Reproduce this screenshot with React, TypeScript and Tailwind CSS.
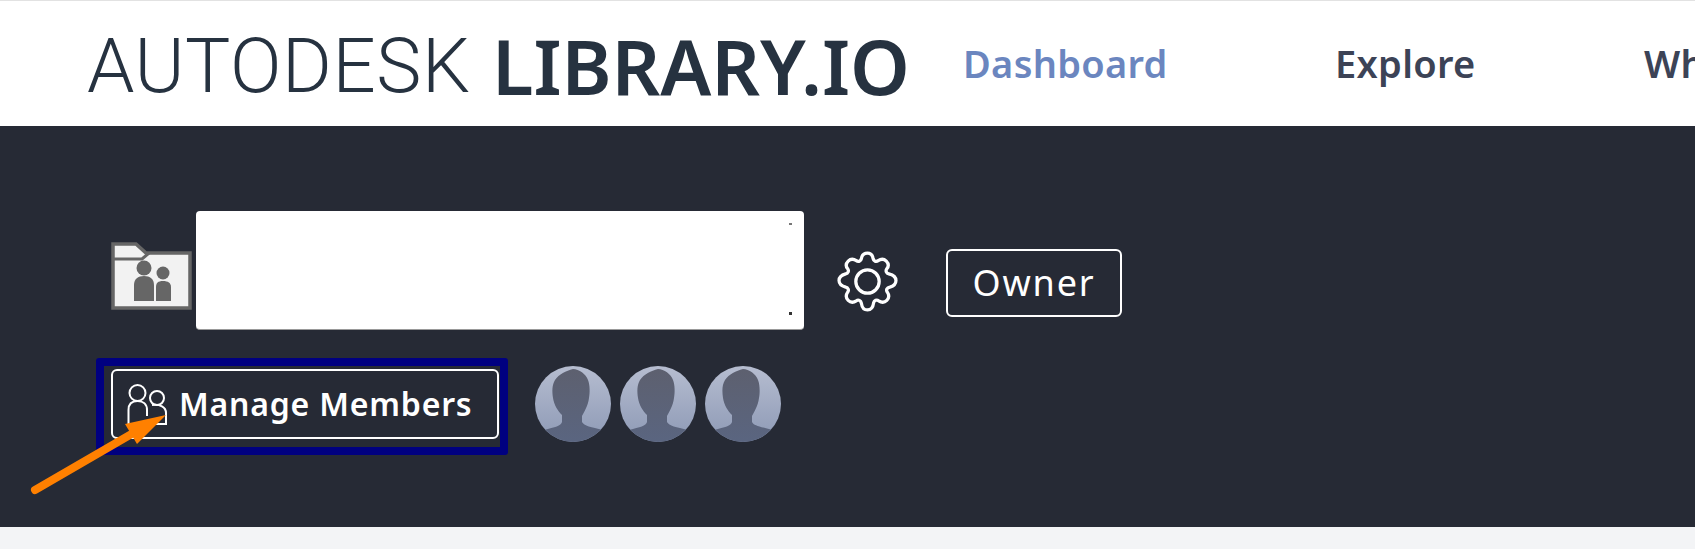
import React from 'react';

function FolderIcon() {
  return (
    <svg width="81" height="68" viewBox="0 0 81 68" className="shrink-0">
      <path d="M2 2H25L35 11H79V66H2Z" fill="#f2f2f2" stroke="#666" strokeWidth="3.500" />
      <path d="M2 17H31L38 11" fill="none" stroke="#666" strokeWidth="3" />
      <circle cx="33" cy="26" r="7.500" fill="#666" />
      <path d="M23 59V43C23 37 27 34 33 34C39 34 43 37 43 43V59Z" fill="#666" />
      <circle cx="52" cy="31" r="6.500" fill="#666" />
      <path d="M45 59V45C45 41 47 39 52 39C57 39 60 41 60 45V59Z" fill="#666" />
    </svg>
  );
}

function GearIcon() {
  const teeth = 'M30 2C33 2 35 4 35.500 7.500C36 10 38.500 11 40.500 9.500C43.500 7.500 46 7.500 48.500 10C51 12.500 51 15 49 17.500C47.500 19.500 48.500 22 51 22.500C55 23.500 58 25.500 58 29C58 32.500 55.500 34.500 52 35.500C49 36 48 38.500 49.500 40.500C51.500 43.500 51.500 46 49 48.500C46.500 51 44 51 41 49C39 47.500 36.500 48.500 36 51C35.500 55 33.500 58 30 58C26.500 58 24.500 55 24 51.500C23.500 48.500 21 47.500 19 49C16 51 13.500 51 11 48.500C8.500 46 8.500 43.500 10.500 40.500C12 38.500 11 36 8.500 35.500C5 34.500 2 32.500 2 29C2 25.500 5 23.500 8.500 22.500C11 22 12 19.500 10.500 17.500C8.500 15 8.500 12.500 11 10C13.500 7.500 16 7.500 19 9.500C21 11 23.500 10 24 7.500C24.500 4 27 2 30 2Z';
  return (
    <svg width="61" height="61" viewBox="0 0 60 60" fill="none" stroke="#fff" strokeWidth="3.200" className="shrink-0">
      <path d={teeth} strokeLinejoin="round" />
      <circle cx="30" cy="30" r="11.500" />
    </svg>
  );
}

function MembersIcon() {
  return (
    <svg width="40" height="41" viewBox="0 0 40 41" fill="none" stroke="#fff" strokeWidth="2" className="shrink-0">
      <circle cx="10.500" cy="9" r="8" />
      <path d="M1.500 40V26C1.500 20 5 17 10.500 17C16 17 20 20 20 26V32" />
      <circle cx="30" cy="14" r="7" />
      <path d="M25 21C33 20 39 23 39 29V40H24" />
    </svg>
  );
}

function Avatar() {
  return (
    <div className="w-[76px] h-[76px] rounded-full overflow-hidden bg-gradient-to-b from-[#b6bdd0] to-[#8d99b5]">
      <svg width="76" height="76" viewBox="0 0 76 76">
        <defs>
          <linearGradient id="bust" x1="0" y1="0" x2="0" y2="1">
            <stop offset="0" stopColor="#5d606f" />
            <stop offset="1" stopColor="#5a6580" />
          </linearGradient>
        </defs>
        <path
          d="M38 3C44 3 51 8 53 14C55 19 55 27 54 32C53 40 49 46 47 50V56C49 60 56 61 68 64L76 76H0L9 64C20 61 26 60 27 56V49C23 45 19 39 18 32C17 25 17 19 20 14C24 8 31 5 38 3Z"
          fill="url(#bust)"
        />
      </svg>
    </div>
  );
}

export default function App() {
  return (
    <div className="w-[1695px] h-[549px] overflow-hidden relative bg-[#f3f4f6] font-['Noto_Sans',sans-serif]">
      <header className="h-[126px] bg-white border-t border-[#e2e2e2] flex items-center pl-[87px] whitespace-nowrap">
        <div className="text-[76px] leading-none text-[#263240] flex shrink-0 w-[876px] pt-[4px]">
          <span className="font-['Roboto',sans-serif] font-light tracking-[0.6px] w-[405px]">AUTODESK</span>
          <span className="font-semibold tracking-[-0.1px]">LIBRARY.IO</span>
        </div>
        <nav className="flex shrink-0 text-[38px] font-semibold tracking-[0.3px]">
          <a className="text-[#6b86bf] w-[372px]">Dashboard</a>
          <a className="text-[#3c4356] w-[309px]">Explore</a>
          <a className="text-[#3c4356]">What's New</a>
        </nav>
      </header>

      <main className="h-[401px] bg-[#262a35] pt-[85px] pl-[96px]">
        <div className="flex items-center pl-[15px] h-[119px]">
          <div className="mt-[10px]">
            <FolderIcon />
          </div>
          <div className="relative ml-1 w-[608px] h-[119px] bg-white rounded border-b border-[#999]">
            <span className="absolute right-[12px] top-[12px] w-[3px] h-[2px] bg-[#777]" />
            <span className="absolute right-[12px] bottom-[14px] w-[3px] h-[3px] bg-[#333]" />
          </div>
          <div className="ml-[33px] mt-[21px]">
            <GearIcon />
          </div>
          <div className="ml-[48px] mt-[24px] h-[68px] w-[176px] border-2 border-white rounded-md flex items-center justify-center text-white text-[36px] tracking-[1.8px]">
            Owner
          </div>
        </div>

        <div className="flex items-center mt-[28px]">
          <div className="border-8 border-[#000080] rounded-[3px] pt-[3px] pl-[7px] pr-px pb-2">
            <button className="w-[388px] h-[70px] border-2 border-white rounded-md flex items-center pl-[14px] gap-[12px] text-white text-[32px] font-semibold tracking-[0.8px]">
              <MembersIcon />
              Manage Members
            </button>
          </div>
          <div className="flex gap-[9px] ml-[27px] -mt-[5px]">
            <Avatar />
            <Avatar />
            <Avatar />
          </div>
        </div>
      </main>

      {/* annotation arrow drawn over the button */}
      <svg className="absolute left-0 top-0 pointer-events-none" width="200" height="500" viewBox="0 0 200 500">
        <path d="M35 490L135 432" stroke="#ff8000" strokeWidth="8" strokeLinecap="round" />
        <path d="M166 415L125 424L137 444Z" fill="#ff8000" />
      </svg>
    </div>
  );
}
